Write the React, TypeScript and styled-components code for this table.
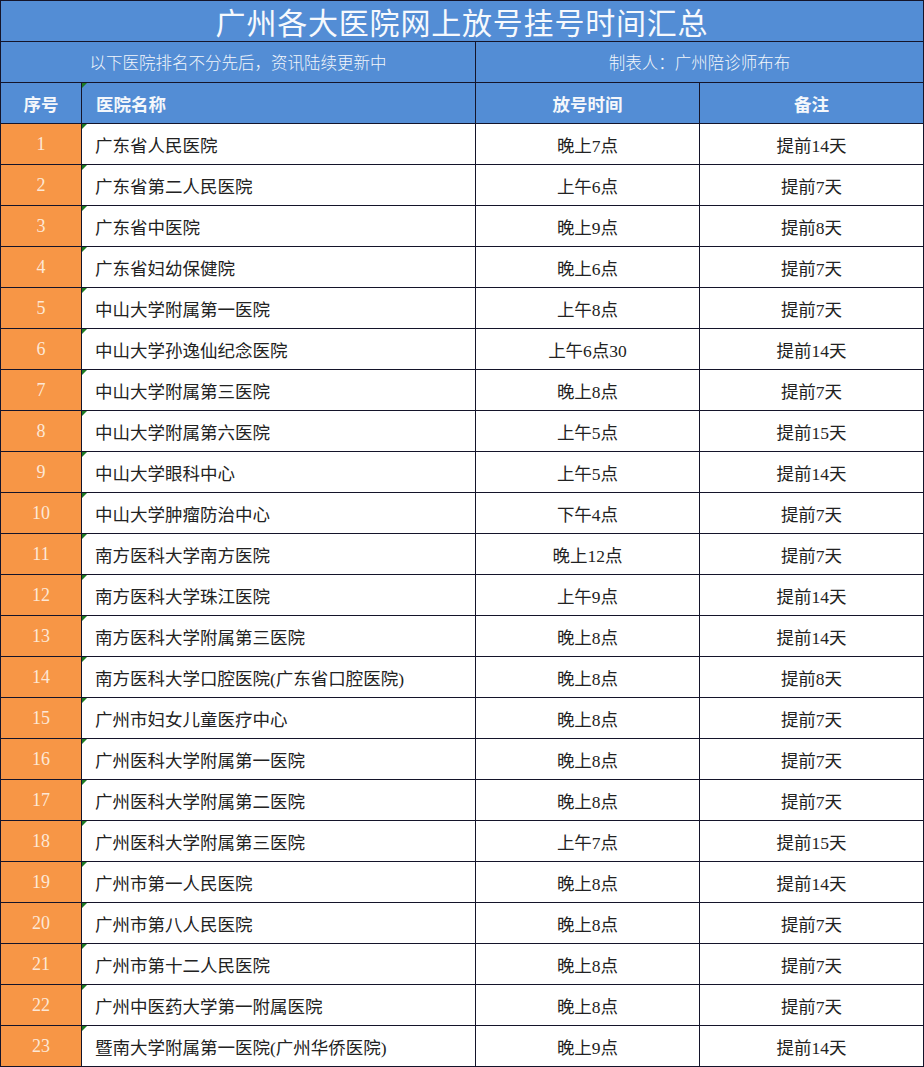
import styled, { createGlobalStyle, css } from 'styled-components';

const rows: [string, string, string][] = [
  ['广东省人民医院', '晚上7点', '提前14天'],
  ['广东省第二人民医院', '上午6点', '提前7天'],
  ['广东省中医院', '晚上9点', '提前8天'],
  ['广东省妇幼保健院', '晚上6点', '提前7天'],
  ['中山大学附属第一医院', '上午8点', '提前7天'],
  ['中山大学孙逸仙纪念医院', '上午6点30', '提前14天'],
  ['中山大学附属第三医院', '晚上8点', '提前7天'],
  ['中山大学附属第六医院', '上午5点', '提前15天'],
  ['中山大学眼科中心', '上午5点', '提前14天'],
  ['中山大学肿瘤防治中心', '下午4点', '提前7天'],
  ['南方医科大学南方医院', '晚上12点', '提前7天'],
  ['南方医科大学珠江医院', '上午9点', '提前14天'],
  ['南方医科大学附属第三医院', '晚上8点', '提前14天'],
  ['南方医科大学口腔医院(广东省口腔医院)', '晚上8点', '提前8天'],
  ['广州市妇女儿童医疗中心', '晚上8点', '提前7天'],
  ['广州医科大学附属第一医院', '晚上8点', '提前7天'],
  ['广州医科大学附属第二医院', '晚上8点', '提前7天'],
  ['广州医科大学附属第三医院', '上午7点', '提前15天'],
  ['广州市第一人民医院', '晚上8点', '提前14天'],
  ['广州市第八人民医院', '晚上8点', '提前7天'],
  ['广州市第十二人民医院', '晚上8点', '提前7天'],
  ['广州中医药大学第一附属医院', '晚上8点', '提前7天'],
  ['暨南大学附属第一医院(广州华侨医院)', '晚上9点', '提前14天'],
];

const BLUE = '#538dd5';
const ORANGE = '#f79646';

function App() {
  return (
    <>
      <GlobalStyle />
      <Sheet>
        <Title>广州各大医院网上放号挂号时间汇总</Title>
        <SubHead $span="1 / 3">以下医院排名不分先后，资讯陆续更新中</SubHead>
        <SubHead $span="3 / 5">制表人：广州陪诊师布布</SubHead>
        <HeadCell $align="center">序号</HeadCell>
        <HeadCell $align="left" $flag>医院名称</HeadCell>
        <HeadCell $align="center">放号时间</HeadCell>
        <HeadCell $align="center">备注</HeadCell>
        {rows.map(([name, time, note], i) => (
          <Row key={name}>
            <IndexCell>{i + 1}</IndexCell>
            <NameCell>{name}</NameCell>
            <Cell>{time}</Cell>
            <Cell>{note}</Cell>
          </Row>
        ))}
      </Sheet>
    </>
  );
}

const GlobalStyle = createGlobalStyle`
  html, body {
    margin: 0;
    padding: 0;
    background: #ffffff;
  }
`;

const Sheet = styled.div`
  display: grid;
  grid-template-columns: 80px 393px 223px 223px;
  grid-auto-rows: 40px;
  gap: 1px;
  padding: 1px;
  width: 924px;
  box-sizing: border-box;
  background: #14142a;
`;

const Title = styled.div`
  grid-column: 1 / 5;
  background: ${BLUE};
  color: #f6f9fd;
  display: flex;
  align-items: center;
  justify-content: center;
  font-family: "Noto Sans CJK SC", sans-serif;
  font-size: 30px;
  font-weight: 400;
  letter-spacing: 0.8px;
`;

const SubHead = styled.div<{ $span: string }>`
  grid-column: ${(p) => p.$span};
  background: ${BLUE};
  color: #f2f6fb;
  display: flex;
  align-items: center;
  justify-content: center;
  font-family: "Noto Sans CJK SC", sans-serif;
  font-size: 16.5px;
  font-weight: 300;
`;

const flag = css`
  position: relative;
  &::before {
    content: '';
    position: absolute;
    top: 0;
    left: 0;
    border-top: 5px solid #1d7a24;
    border-right: 5px solid transparent;
  }
`;

const HeadCell = styled.div<{ $align: 'left' | 'center'; $flag?: boolean }>`
  background: ${BLUE};
  color: #f4f7fb;
  display: flex;
  align-items: center;
  justify-content: ${(p) => (p.$align === 'left' ? 'flex-start' : 'center')};
  padding-left: ${(p) => (p.$align === 'left' ? '14px' : '0')};
  font-family: "Noto Sans CJK SC", sans-serif;
  font-size: 17.5px;
  font-weight: 700;
  ${(p) => p.$flag && flag}
`;

const Row = styled.div`
  display: contents;
`;

const Cell = styled.div`
  background: #ffffff;
  color: #222222;
  display: flex;
  align-items: center;
  justify-content: center;
  font-family: "Liberation Serif", "Noto Sans CJK SC", serif;
  font-size: 17.5px;
  font-weight: 400;
`;

const IndexCell = styled(Cell)`
  background: ${ORANGE};
  color: #fde8d6;
  font-size: 18px;
`;

const NameCell = styled(Cell)`
  justify-content: flex-start;
  padding-left: 13px;
  ${flag}
`;

export default App;
